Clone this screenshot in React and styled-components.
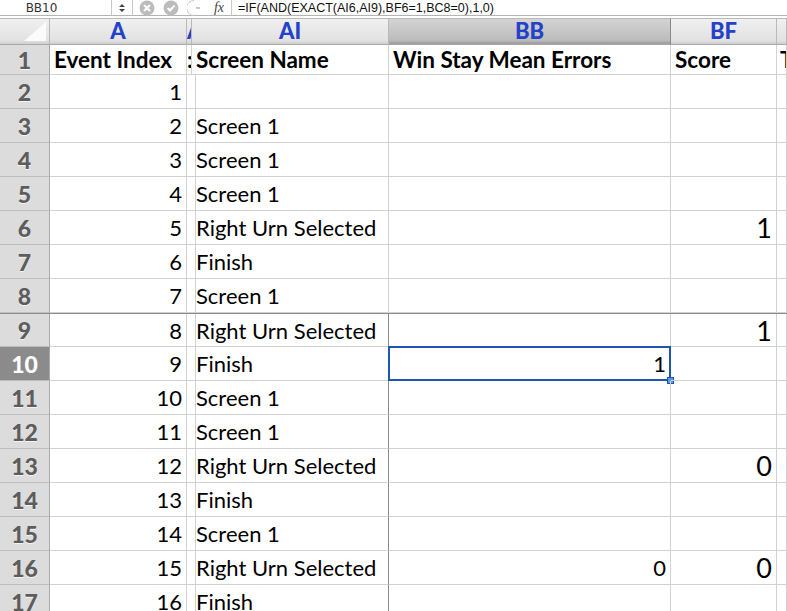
import React from 'react';
import styled, { createGlobalStyle } from 'styled-components';

const GlobalStyle = createGlobalStyle`
  html, body {
    margin: 0;
    padding: 0;
    background: #ffffff;
    overflow: hidden;
  }
  body {
    font-family: Lato, "Liberation Sans", sans-serif;
  }
`;

const COLS = '50px 137px 5px 197px 282px 106px 1fr';

const Window = styled.div`
  width: 787px;
  height: 611px;
  overflow: hidden;
  background: #fff;
`;

const FormulaBar = styled.div`
  display: flex;
  align-items: center;
  height: 16px;
  box-sizing: border-box;
  border-bottom: 1px solid #b4b4b4;
  background: #fff;
  margin-bottom: 2px;
  font-family: "DejaVu Sans", "Liberation Sans", sans-serif;
  font-size: 12px;
  color: #222;
`;

const NameBox = styled.div`
  width: 112px;
  height: 100%;
  display: flex;
  align-items: center;
  justify-content: center;
  padding-right: 28px;
  box-sizing: border-box;
  border-right: 1px solid #c8c8c8;
  color: #333;
`;

const Spinner = styled.div`
  width: 20px;
  display: flex;
  justify-content: center;
  border-right: 1px solid #c8c8c8;
  height: 100%;
  align-items: center;
`;

const IconGroup = styled.div`
  display: flex;
  align-items: center;
  gap: 8px;
  padding-left: 6px;
  height: 100%;
`;

const Fx = styled.div`
  font-family: "Liberation Serif", serif;
  font-style: italic;
  font-size: 14px;
  color: #444;
  width: 24px;
  text-align: center;
  border-right: 1px solid #c8c8c8;
  height: 100%;
  line-height: 15px;
  margin-left: 4px;
`;

const Formula = styled.div`
  padding-left: 6px;
  font-family: "Liberation Sans", sans-serif;
  font-size: 12.5px;
  color: #111;
  white-space: nowrap;
`;

const Row = styled.div`
  display: grid;
  grid-template-columns: ${COLS};
  height: ${(p) => p.$h}px;
  box-sizing: border-box;
  border-top: ${(p) => (p.$split ? '1px solid #8c8c8c' : 'none')};
`;

const ColHead = styled.div`
  box-sizing: border-box;
  background: ${(p) =>
    p.$sel
      ? 'linear-gradient(#d4d4d4, #bcbcbc 85%, #999999)'
      : 'linear-gradient(#f0f0f0, #e2e2e2 85%, #cfcfcf)'};
  border-right: 1px solid ${(p) => (p.$sel ? '#8a8a8a' : '#b9b9b9')};
  border-top: 1px solid #b9b9b9;
  border-bottom: 1px solid #a8a8a8;
  color: #2342c9;
  font-weight: 900;
  font-size: 22px;
  text-align: ${(p) => (p.$left ? 'left' : 'center')};
  line-height: 24px;
  overflow: hidden;
  white-space: nowrap;
  position: relative;
`;

const Corner = styled(ColHead)`
  &::after {
    content: '';
    position: absolute;
    right: 3px;
    bottom: 3px;
    width: 0;
    height: 0;
    border-left: 22px solid transparent;
    border-bottom: 19px solid #fbfbfb;
  }
`;

const RowHead = styled.div`
  box-sizing: border-box;
  background: ${(p) => (p.$sel ? '#8b8b8b' : '#dcdcdc')};
  color: ${(p) => (p.$sel ? '#ffffff' : '#5d5d5d')};
  text-shadow: ${(p) => (p.$sel ? 'none' : '0 1px 0 #f4f4f4')};
  border-right: 1px solid #a9a9a9;
  border-bottom: 1px solid #bdbdbd;
  font-weight: 900;
  font-size: 23px;
  display: flex;
  align-items: center;
  justify-content: center;
`;

const Cell = styled.div`
  box-sizing: border-box;
  border-right: 1px solid ${(p) => (p.$dark ? '#8c8c8c' : '#d2d2d2')};
  border-bottom: 1px solid #d2d2d2;
  display: flex;
  align-items: center;
  justify-content: ${(p) => (p.$num ? 'flex-end' : 'flex-start')};
  padding: 0 ${(p) => (p.$pad ?? 4)}px;
  font-size: ${(p) => p.$size || (p.$bold ? 22.5 : 22)}px;
  font-weight: ${(p) => (p.$bold ? 700 : 400)};
  color: #000;
  white-space: nowrap;
  overflow: hidden;
  position: relative;
`;

const Selected = styled(Cell)`
  overflow: visible;
  &::before {
    content: '';
    position: absolute;
    left: -1px;
    top: -1px;
    right: -1px;
    bottom: -1px;
    border: 2px solid #1d55b5;
    pointer-events: none;
  }
  &::after {
    content: '';
    position: absolute;
    right: -4px;
    bottom: -4px;
    width: 5px;
    height: 5px;
    background: #5d9ae6;
    border: 1px solid #1d55b5;
  }
`;

const Circle = ({ children }) => (
  <svg width="16" height="16" viewBox="0 0 16 16">
    <circle cx="8" cy="8" r="7.5" fill="#bcbcbc" />
    {children}
  </svg>
);

const rows = [
  [2, '1', '', '', ''],
  [3, '2', 'Screen 1', '', ''],
  [4, '3', 'Screen 1', '', ''],
  [5, '4', 'Screen 1', '', ''],
  [6, '5', 'Right Urn Selected', '', '1'],
  [7, '6', 'Finish', '', ''],
  [8, '7', 'Screen 1', '', ''],
  [9, '8', 'Right Urn Selected', '', '1'],
  [10, '9', 'Finish', '1', ''],
  [11, '10', 'Screen 1', '', ''],
  [12, '11', 'Screen 1', '', ''],
  [13, '12', 'Right Urn Selected', '', '0'],
  [14, '13', 'Finish', '', ''],
  [15, '14', 'Screen 1', '', ''],
  [16, '15', 'Right Urn Selected', '0', '0'],
  [17, '16', 'Finish', '', ''],
];

export default function App() {
  return (
    <Window>
      <GlobalStyle />
      <FormulaBar>
        <NameBox>BB10</NameBox>
        <Spinner>
          <svg width="6" height="10" viewBox="0 0 6 10">
            <path d="M0 4 L3 1 L6 4 Z M0 6 L3 9 L6 6 Z" fill="#444" />
          </svg>
        </Spinner>
        <IconGroup>
          <Circle>
            <path d="M5 5 L11 11 M11 5 L5 11" stroke="#fff" strokeWidth="2" />
          </Circle>
          <Circle>
            <path d="M4.5 8 L7 10.5 L11.5 5.5" stroke="#fff" strokeWidth="2" fill="none" />
          </Circle>
          <svg width="16" height="16" viewBox="0 0 16 16">
            <path d="M7 0.5 A7.5 7.5 0 0 0 7 15.5" stroke="#c8c8c8" fill="none" />
            <path d="M9 8 L13 8" stroke="#c8c8c8" strokeWidth="2" />
          </svg>
        </IconGroup>
        <Fx>fx</Fx>
        <Formula>=IF(AND(EXACT(AI6,AI9),BF6=1,BC8=0),1,0)</Formula>
      </FormulaBar>

      <Row $h={27}>
        <Corner />
        <ColHead>A</ColHead>
        <ColHead $left>A</ColHead>
        <ColHead>AI</ColHead>
        <ColHead $sel>BB</ColHead>
        <ColHead>BF</ColHead>
        <ColHead />
      </Row>

      <Row $h={30}>
        <RowHead>1</RowHead>
        <Cell $bold>Event Index</Cell>
        <Cell $bold $pad={0}>:</Cell>
        <Cell $bold>Screen Name</Cell>
        <Cell $bold>Win Stay Mean Errors</Cell>
        <Cell $bold>Score</Cell>
        <Cell $bold $pad={3}>T</Cell>
      </Row>

      {rows.map(([n, a, ai, bb, bf]) => {
        const sel = n === 10;
        const BBCell = sel ? Selected : Cell;
        return (
          <Row key={n} $h={34} $split={n === 9}>
            <RowHead $sel={sel}>{n}</RowHead>
            <Cell $num>{a}</Cell>
            <Cell />
            <Cell $dark={n >= 9}>{ai}</Cell>
            <BBCell $num>{bb}</BBCell>
            <Cell $num $size={27} $pad={4}>{bf}</Cell>
            <Cell />
          </Row>
        );
      })}
    </Window>
  );
}
